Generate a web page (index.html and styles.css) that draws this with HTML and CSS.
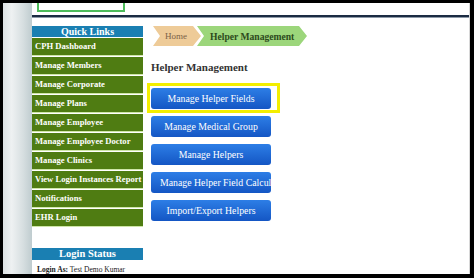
FILE: index.html
```html
<!DOCTYPE html>
<html lang="en">
  <head>
    <meta charset="UTF-8" />
    <title>Helper Management</title>
    <link rel="stylesheet" href="styles.css">
  </head>
  <body>
    <div class="screen">
      <div class="gutter"></div>
      <div class="page">
        <div class="topbar">
          <div class="logo-box"></div>
        </div>
        <div class="rule"></div>

        <div class="layout">
          <div class="sidebar">
            <div class="side-head">Quick Links</div>
            <ul class="links">
              <li>CPH Dashboard</li>
              <li>Manage Members</li>
              <li>Manage Corporate</li>
              <li>Manage Plans</li>
              <li>Manage Employee</li>
              <li>Manage Employee Doctor</li>
              <li>Manage Clinics</li>
              <li>View Login Instances Report</li>
              <li>Notifications</li>
              <li>EHR Login</li>
            </ul>

            <div class="side-head status-head">Login Status</div>
            <div class="login-as"><strong>Login As:</strong> Test Demo Kumar</div>
          </div>

          <div class="main">
            <div class="crumbs">
              <span class="crumb home">Home</span>
              <span class="crumb current">Helper Management</span>
            </div>

            <h2>Helper Management</h2>

            <div class="actions">
              <div class="highlight"><a class="action">Manage Helper Fields</a></div>
              <a class="action">Manage Medical Group</a>
              <a class="action">Manage Helpers</a>
              <a class="action">Manage Helper Field Calculations</a>
              <a class="action">Import/Export Helpers</a>
            </div>
          </div>
        </div>
      </div>
    </div>
  </body>
</html>
```

FILE: styles.css
```css
* {
  box-sizing: border-box;
}

html,
body {
  margin: 0;
  background: #000;
  height: 100%;
}

body {
  font-family: "Liberation Serif", "Times New Roman", serif;
  overflow: hidden;
}

.screen {
  display: flex;
  width: 467px;
  height: 271px;
  margin: 3px 0 0 3px;
  overflow: hidden;
}

.gutter {
  width: 29px;
  flex-shrink: 0;
  background: linear-gradient(to right, #dde2e4, #eef1f2 30%, #d6dee0 70%, #bfcccf);
}

.page {
  flex: 1;
  background: #fff;
  border-right: 1px solid #d8d8d8;
}

.topbar {
  height: 12px;
  padding-left: 5px;
}

.logo-box {
  width: 88px;
  height: 9px;
  border: 2px solid #4dbb5a;
  border-top: none;
}

.rule {
  height: 3px;
  background: #1b2b42;
  border-bottom: 1px solid #8e9aa8;
}

.layout {
  display: flex;
  padding-top: 8px;
}

.sidebar {
  width: 111px;
  flex-shrink: 0;
}

.side-head {
  background: #1a7fb2;
  color: #fff;
  font-weight: bold;
  font-size: 10px;
  text-align: center;
  height: 11px;
  line-height: 11px;
}

.links {
  list-style: none;
  margin: 0;
  padding: 1px 0 0;
}

.links li {
  height: 17px;
  line-height: 17px;
  margin-bottom: 2px;
  padding-left: 3px;
  background: #4f7c12;
  color: #fff;
  font-weight: bold;
  font-size: 8.6px;
  white-space: nowrap;
  box-shadow: 0 1px 0 #cfe6a8;
}

.status-head {
  margin-top: 22px;
  height: 12px;
  line-height: 12px;
  font-size: 10.5px;
}

.login-as {
  font-size: 7.5px;
  padding: 5px 0 0 5px;
  color: #222;
}

.main {
  flex: 1;
  padding-left: 8px;
}

.crumbs {
  display: flex;
  height: 20px;
  margin-left: 2px;
}

.crumb {
  display: flex;
  align-items: center;
  height: 20px;
  font-size: 9px;
  clip-path: polygon(0 0, calc(100% - 8px) 0, 100% 50%, calc(100% - 8px) 100%, 0 100%, 7px 50%);
}

.home {
  width: 48px;
  padding-left: 12px;
  background: #eecb98;
  color: #7a6248;
}

.current {
  width: 110px;
  margin-left: -4px;
  padding-left: 13px;
  background: #9cd67b;
  color: #2c4a1c;
  font-weight: bold;
  font-size: 9.6px;
}

h2 {
  margin: 15px 0 0;
  font-size: 11px;
  color: #333;
  line-height: 13px;
}

.actions {
  display: flex;
  flex-direction: column;
  gap: 7px;
  margin-top: 14px;
}

.highlight {
  position: relative;
  width: 120px;
}

.highlight::after {
  content: "";
  position: absolute;
  top: -5px;
  left: -4px;
  right: -9px;
  bottom: -4px;
  border: 3px solid #f3ee00;
}

.action {
  display: block;
  width: 120px;
  height: 21px;
  line-height: 21px;
  padding: 0 9px;
  border-radius: 3px;
  background: linear-gradient(#2d7ee6, #1456c4);
  color: #fff;
  font-size: 9.8px;
  text-align: center;
  white-space: nowrap;
  overflow: hidden;
}
```
